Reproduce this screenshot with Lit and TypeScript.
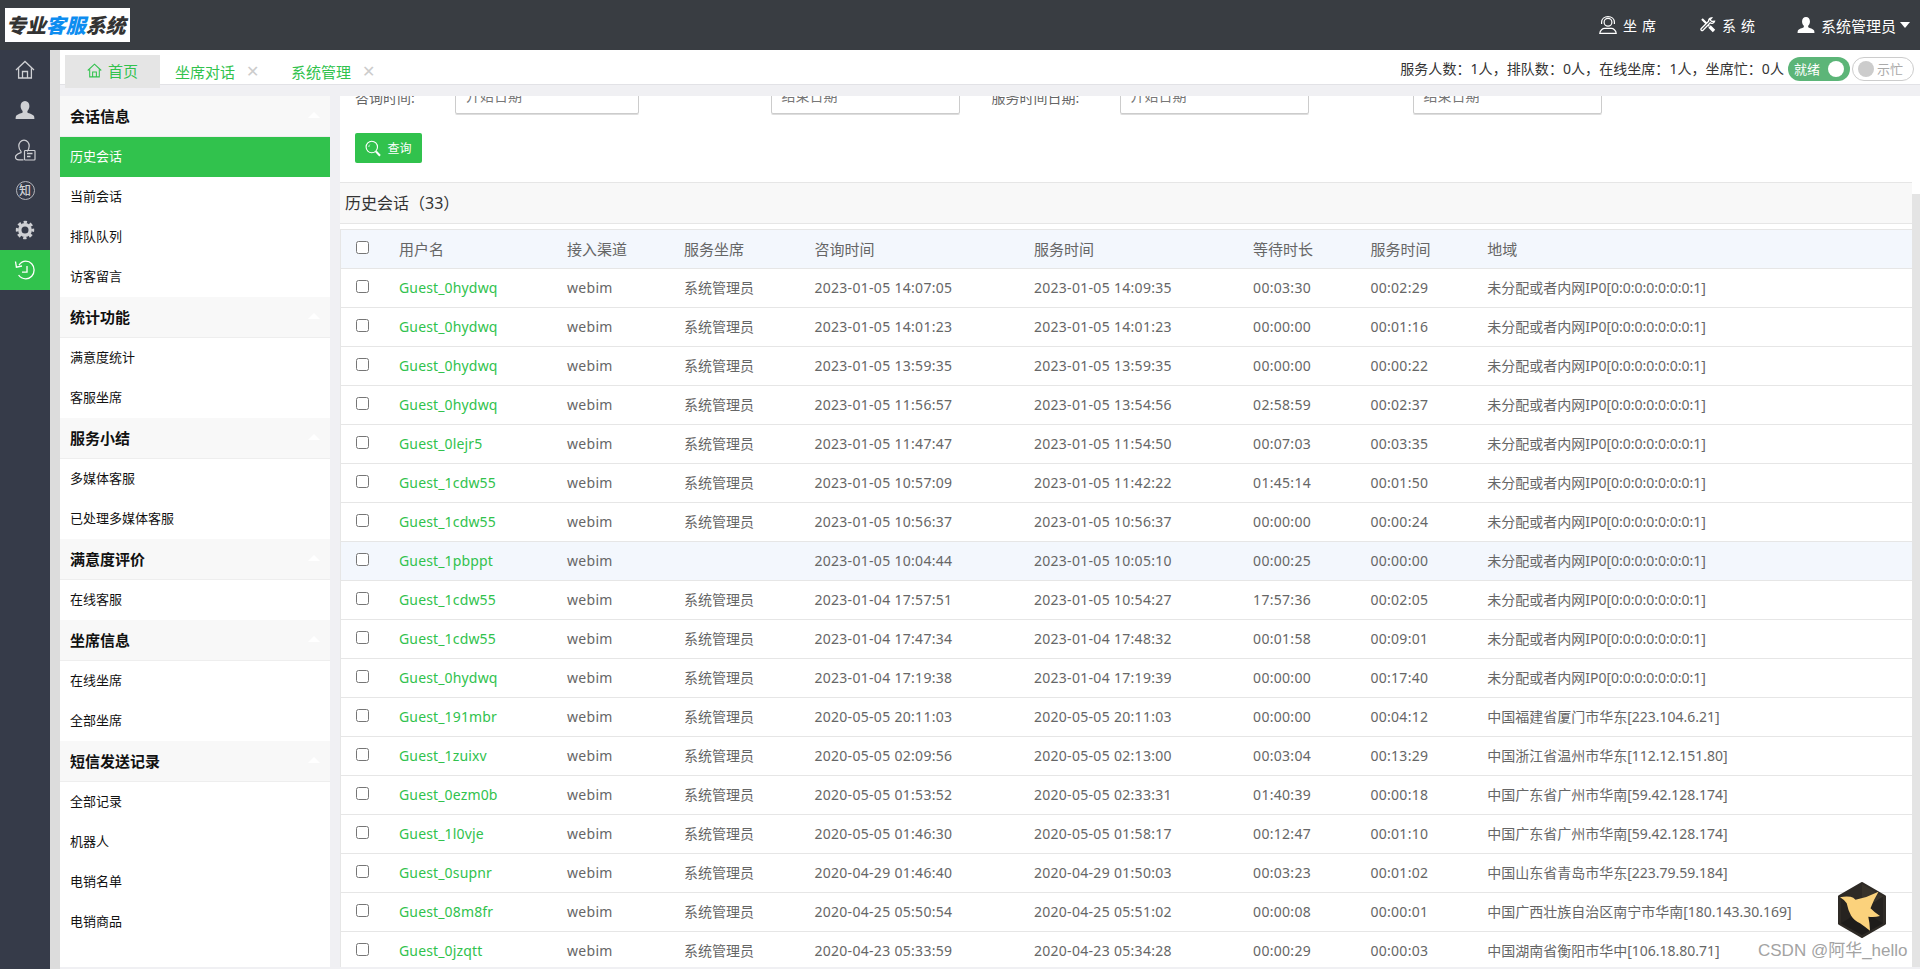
import { LitElement, html, css, svg } from "lit";
import { customElement } from "lit/decorators.js";

const A = "系统管理员";
const L0 = "未分配或者内网IP0[0:0:0:0:0:0:0:1]";
const rows: string[][] = [
  ["Guest_0hydwq", A, "2023-01-05 14:07:05", "2023-01-05 14:09:35", "00:03:30", "00:02:29", L0],
  ["Guest_0hydwq", A, "2023-01-05 14:01:23", "2023-01-05 14:01:23", "00:00:00", "00:01:16", L0],
  ["Guest_0hydwq", A, "2023-01-05 13:59:35", "2023-01-05 13:59:35", "00:00:00", "00:00:22", L0],
  ["Guest_0hydwq", A, "2023-01-05 11:56:57", "2023-01-05 13:54:56", "02:58:59", "00:02:37", L0],
  ["Guest_0lejr5", A, "2023-01-05 11:47:47", "2023-01-05 11:54:50", "00:07:03", "00:03:35", L0],
  ["Guest_1cdw55", A, "2023-01-05 10:57:09", "2023-01-05 11:42:22", "01:45:14", "00:01:50", L0],
  ["Guest_1cdw55", A, "2023-01-05 10:56:37", "2023-01-05 10:56:37", "00:00:00", "00:00:24", L0],
  ["Guest_1pbppt", "", "2023-01-05 10:04:44", "2023-01-05 10:05:10", "00:00:25", "00:00:00", L0],
  ["Guest_1cdw55", A, "2023-01-04 17:57:51", "2023-01-05 10:54:27", "17:57:36", "00:02:05", L0],
  ["Guest_1cdw55", A, "2023-01-04 17:47:34", "2023-01-04 17:48:32", "00:01:58", "00:09:01", L0],
  ["Guest_0hydwq", A, "2023-01-04 17:19:38", "2023-01-04 17:19:39", "00:00:00", "00:17:40", L0],
  ["Guest_191mbr", A, "2020-05-05 20:11:03", "2020-05-05 20:11:03", "00:00:00", "00:04:12", "中国福建省厦门市华东[223.104.6.21]"],
  ["Guest_1zuixv", A, "2020-05-05 02:09:56", "2020-05-05 02:13:00", "00:03:04", "00:13:29", "中国浙江省温州市华东[112.12.151.80]"],
  ["Guest_0ezm0b", A, "2020-05-05 01:53:52", "2020-05-05 02:33:31", "01:40:39", "00:00:18", "中国广东省广州市华南[59.42.128.174]"],
  ["Guest_1l0vje", A, "2020-05-05 01:46:30", "2020-05-05 01:58:17", "00:12:47", "00:01:10", "中国广东省广州市华南[59.42.128.174]"],
  ["Guest_0supnr", A, "2020-04-29 01:46:40", "2020-04-29 01:50:03", "00:03:23", "00:01:02", "中国山东省青岛市华东[223.79.59.184]"],
  ["Guest_08m8fr", A, "2020-04-25 05:50:54", "2020-04-25 05:51:02", "00:00:08", "00:00:01", "中国广西壮族自治区南宁市华南[180.143.30.169]"],
  ["Guest_0jzqtt", A, "2020-04-23 05:33:59", "2020-04-23 05:34:28", "00:00:29", "00:00:03", "中国湖南省衡阳市华中[106.18.80.71]"],
];

const menu: [string, string[]][] = [
  ["会话信息", ["历史会话", "当前会话", "排队队列", "访客留言"]],
  ["统计功能", ["满意度统计", "客服坐席"]],
  ["服务小结", ["多媒体客服", "已处理多媒体客服"]],
  ["满意度评价", ["在线客服"]],
  ["坐席信息", ["在线坐席", "全部坐席"]],
  ["短信发送记录", ["全部记录", "机器人", "电销名单", "电销商品"]],
];

const personPath = "M10 1C7.2 1 5.6 3.2 5.6 6c0 2 .8 3.8 2 4.9v1.6c-1.6 1.1-5.8 1.7-6.6 3.6-.3.8-.4 1.9-.4 2.9h18.8c0-1-.1-2.1-.4-2.9-.8-1.9-5-2.5-6.6-3.6v-1.6c1.2-1.1 2-2.9 2-4.9C14.4 3.2 12.8 1 10 1z";

const icons = {
  home: svg`<svg width="20" height="20" viewBox="0 0 20 20" fill="none" stroke="currentColor" stroke-width="1.3"><path d="M1 10 10 1.5 19 10"/><path d="M3.6 8.2V18h12.8V8.2"/><path d="M7.5 18v-6.5h5V18"/></svg>`,
  person: svg`<svg width="20" height="20" viewBox="0 0 20 20" fill="currentColor"><path d="${personPath}"/></svg>`,
  personTop: svg`<svg width="18" height="18" viewBox="0 0 20 20" fill="currentColor"><path d="${personPath}"/></svg>`,
  card: svg`<svg width="22" height="22" viewBox="0 0 22 22" fill="none" stroke="currentColor" stroke-width="1.2"><path d="M13 12.5c1.4-1.4 2.2-3.2 2.2-5.4C15.200 3.800 13 1.200 10 1.200S4.800 3.800 4.800 7.100c0 2.200.9 4 2.200 5.300v1.200c-2 .8-5.500 1.800-5.500 4.400 0 1.800 1.500 2.800 3.500 2.800h4.500"/><rect x="10.500" y="11.500" width="10.500" height="9.500" rx=".8"/><path d="M13 14.500h5.500M13 17.500h3.500" stroke-width="1.400"/></svg>`,
  gear: svg`<svg width="20" height="20" viewBox="0 0 20 20" fill="none" stroke="currentColor"><circle cx="10" cy="10" r="5.200" stroke-width="3.400"/><circle cx="10" cy="10" r="7.800" stroke-width="2.800" stroke-dasharray="3.300 2.830" stroke-dashoffset="1.600"/></svg>`,
  history: svg`<svg width="22" height="22" viewBox="0 0 22 22" fill="none" stroke="currentColor" stroke-width="1.300"><path d="M5 6.200C6.700 3.600 9 2.200 11.800 2.200c4.700 0 8.300 3.900 8.300 8.800s-3.600 8.800-8.300 8.800c-3.200 0-5.700-1.400-7.200-3.800"/><path d="M1.500 2.500l.9 5.700 5.600-1.200"/><path d="M13 7v6.200H8"/></svg>`,
  agent: svg`<svg width="18" height="18" viewBox="0 0 18 18" fill="none" stroke="currentColor" stroke-width="1.200"><circle cx="9" cy="6.300" r="3.900"/><path d="M2.600 8V6.300C2.600 2.900 5.400.7 9 .7s6.400 2.200 6.400 5.600V8"/><path d="M.8 17.300c.2-3 3-4.900 4.800-4.900h6.800c1.800 0 4.600 1.900 4.800 4.900z"/></svg>`,
  tools: svg`<svg width="16" height="16" viewBox="0 0 16 16" fill="none" stroke="currentColor"><path d="M2 2 9 9" stroke-width="2.200"/><path d="M9.500 9.500 14 14" stroke-width="3.400"/><path d="M14.500 4.200a3 3 0 0 1-4.300 1.700L3 13.200a1.200 1.200 0 0 1-1.700-1.700L8.600 4.200A3 3 0 0 1 11.800 .8L10 2.800l1.700 1.600z" stroke-width="1.300" fill="#393d42"/></svg>`,
  search: svg`<svg width="16" height="17" viewBox="0 0 16 17" fill="none" stroke="currentColor"><circle cx="6.800" cy="7" r="5.700" stroke-width="1.100"/><path d="M11 11.500 15 15.800" stroke-width="2"/><path d="M3.800 7a3 3 0 0 1 1-2.300" stroke-width=".8"/></svg>`,
  tabHome: svg`<svg width="15" height="15" viewBox="0 0 20 20" fill="none" stroke="currentColor" stroke-width="1.400"><path d="M1 10 10 1.500 19 10"/><path d="M3.600 8.200V18.500h12.800V8.200"/><path d="M7.500 18.500V12h5v6.500"/></svg>`,
};

@customElement("app-root")
export class AppRoot extends LitElement {
  static styles = css`
    :host {
      display: block;
      position: relative;
      width: 1920px;
      height: 969px;
      overflow: hidden;
      font-family: "Noto Sans", "Noto Sans CJK SC", sans-serif;
      font-size: 14px;
      color: #333;
      background: #f0f0f3;
    }
    .top {
      height: 50px;
      background: #393d42;
      display: flex;
      align-items: center;
      padding: 0 10px 0 5px;
      box-sizing: border-box;
      color: #fff;
    }
    .logo {
      width: 125px;
      height: 34px;
      background: #fff;
      color: #333;
      font: italic 900 20px/34px "Noto Sans CJK SC", sans-serif;
      white-space: nowrap;
      padding-left: 1px;
      box-sizing: border-box;
      letter-spacing: -0.1px;
    }
    .logo b { color: #0d8df0; font-weight: 900; }
    .top-right { margin-left: auto; display: flex; align-items: center; gap: 37px; }
    .top-item { display: flex; align-items: center; gap: 6px; font-size: 14px; line-height: 20px; }
    .top-item.first { margin-right: 2px; }
    .top-item .sp { letter-spacing: 5px; margin-top: 2px; }
    .top-item .name { font-size: 15px; margin-top: 1px; }
    .caret {
      width: 0;
      height: 0;
      border-left: 5.5px solid transparent;
      border-right: 5.5px solid transparent;
      border-top: 6px solid #fff;
      margin-left: -2px;
    }
    .body { display: flex; height: 919px; }
    .rail { width: 50px; background: #363b49; flex: none; color: #cfd0d4; }
    .rail-item { height: 40px; display: flex; align-items: center; justify-content: center; }
    .rail-item.on { background: #31c24d; color: #fff; }
    .zhi {
      width: 17px;
      height: 17px;
      border: 1px solid #b5b6bc;
      border-radius: 50%;
      font-size: 12px;
      line-height: 17px;
      text-align: center;
      font-weight: 500;
    }
    .strip { width: 10px; background: #dcdcdc; flex: none; }
    .right { flex: 1; min-width: 0; display: flex; flex-direction: column; }
    .tabs {
      height: 35px;
      flex: none;
      background: #fff;
      border-bottom: 1px solid #e2e2e6;
      box-sizing: border-box;
      display: flex;
      align-items: flex-start;
      padding: 5px 6px 0 5px;
      color: #31c24d;
      font-size: 15px;
      line-height: 22px;
    }
    .tab-home {
      width: 95px;
      height: 33px;
      flex: none;
      background: #e5e5e5;
      display: flex;
      align-items: center;
      justify-content: center;
      gap: 6px;
      padding-bottom: 2px;
      box-sizing: border-box;
    }
    .tab { display: flex; align-items: center; margin-top: 6px; flex: none; white-space: nowrap; }
    .tab.a { margin-left: 15px; }
    .tab.b { margin-left: 32px; }
    .tab .x { color: #ccc; margin-left: 11px; font-size: 16px; line-height: 20px; font-family: "Liberation Sans", sans-serif; }
    .status { margin-left: auto; display: flex; align-items: center; gap: 2px; margin-top: 2px; color: #333; font-size: 14px; white-space: nowrap; }
    .status .txt { margin-right: 2px; letter-spacing: 0.06px; }
    .sw {
      width: 62px;
      height: 24px;
      border-radius: 12px;
      box-sizing: border-box;
      display: flex;
      align-items: center;
      padding: 0 6px;
      font-size: 13px;
      gap: 3px;
    }
    .sw.on { background: #5cb578; color: #fff; justify-content: space-between; }
    .sw.off { border: 1px solid #ccc; color: #aaa; padding: 0 5px; }
    .knob { width: 16px; height: 16px; border-radius: 50%; flex: none; background: #fff; }
    .sw.off .knob { background: #ccc; }
    .content { flex: 1; min-height: 0; display: flex; gap: 10px; margin-top: 11px; margin-bottom: 2px; }
    .side { width: 270px; background: #fff; flex: none; color: #111; overflow: hidden; }
    .sec {
      height: 41px;
      background: #f8f8f8;
      border-bottom: 1px solid #eee;
      box-sizing: border-box;
      display: flex;
      align-items: center;
      justify-content: space-between;
      padding: 0 10px 2px;
      font-size: 15px;
      font-weight: 700;
    }
    .sec i { width: 0; height: 0; border-left: 6px solid transparent; border-right: 6px solid transparent; border-bottom: 6px solid #fff; }
    .it { height: 40px; line-height: 38px; padding-left: 10px; font-size: 13px; }
    .it.on { background: #31c24d; color: #fff; }
    .main { flex: 1; min-width: 0; background: #fff; position: relative; overflow: hidden; }
    .form {
      margin-top: -16px;
      height: 34px;
      display: grid;
      grid-template-columns: 100px 184px 131.6px 189.4px 31.6px 128px 189.5px 103.5px 189.5px;
      grid-template-rows: 34px;
      padding-left: 15px;
      align-items: center;
      color: #666;
      font-size: 14px;
    }
    .form .tilde { text-align: center; line-height: 14px; margin-bottom: 17px; }
    .date {
      height: 34px;
      border: 1px solid #ccc;
      border-radius: 2px;
      box-shadow: 0 1px 0 #ddd;
      box-sizing: border-box;
      padding-left: 10px;
      line-height: 30px;
      color: #777;
    }
    .btn {
      margin: 19px 0 19px 15px;
      width: 67px;
      height: 30px;
      background: #31c24d;
      border-radius: 2px;
      color: #fff;
      display: flex;
      align-items: center;
      justify-content: center;
      gap: 6px;
      font-size: 12px;
    }
    .panel-head {
      width: 1572px;
      height: 42px;
      border-top: 1px solid #e6e6e6;
      border-bottom: 1px solid #e6e6e6;
      background: #f8f8f8;
      box-sizing: border-box;
      padding-left: 5px;
      line-height: 40px;
      font-size: 16px;
      color: #333;
    }
    table {
      width: 1572px;
      margin-top: 5px;
      border-collapse: separate;
      border-spacing: 0;
      table-layout: fixed;
      border-top: 1px solid #e6e6e6;
      border-left: 1px solid #e6e6e6;
      box-sizing: border-box;
      color: #666;
    }
    th, td {
      height: 39px;
      padding: 0;
      box-sizing: border-box;
      border-bottom: 1px solid #e6e6e6;
      text-align: left;
      font-weight: 400;
      white-space: nowrap;
      line-height: 20px;
      letter-spacing: 0.3px;
    }
    th { font-size: 15px; background: #f3f7fd; letter-spacing: 0; padding-bottom: 1px; }
    td.tight { letter-spacing: 0; }
    tr.hl td { background: #f3f7fd; }
    .u { color: #31c24d; letter-spacing: 0.15px; }
    input[type="checkbox"] { margin: 0 0 3px 15px; width: 13px; height: 13px; display: block; }
    .thumb { position: absolute; right: 0; top: 98px; bottom: 0; width: 8px; background: #e4e4e4; }
    .bird { position: absolute; left: 1837px; top: 882px; }
    .mark {
      position: absolute;
      left: 1758px;
      top: 940px;
      color: #a3a3a3;
      font-family: "Liberation Sans", "Noto Sans CJK SC", sans-serif;
      font-size: 17px;
      line-height: 22px;
      white-space: nowrap;
    }
  `;

  render() {
    const widths = [58, 168, 117, 130.4, 219.5, 219.2, 117.3, 116.8, 425.8];
    return html`
      <div class="top">
        <div class="logo">专业<b>客服</b>系统</div>
        <div class="top-right">
          <div class="top-item first">${icons.agent}<span class="sp">坐席</span></div>
          <div class="top-item">${icons.tools}<span class="sp">系统</span></div>
          <div class="top-item">${icons.personTop}<span class="name">系统管理员</span><span class="caret"></span></div>
        </div>
      </div>
      <div class="body">
        <div class="rail">
          <div class="rail-item">${icons.home}</div>
          <div class="rail-item">${icons.person}</div>
          <div class="rail-item">${icons.card}</div>
          <div class="rail-item"><span class="zhi">知</span></div>
          <div class="rail-item">${icons.gear}</div>
          <div class="rail-item on">${icons.history}</div>
        </div>
        <div class="strip"></div>
        <div class="right">
          <div class="tabs">
            <div class="tab-home">${icons.tabHome}<span>首页</span></div>
            <div class="tab a">坐席对话<span class="x">✕</span></div>
            <div class="tab b">系统管理<span class="x">✕</span></div>
            <div class="status">
              <span class="txt">服务人数：1人，排队数：0人，在线坐席：1人，坐席忙：0人</span>
              <div class="sw on"><span>就绪</span><span class="knob"></span></div>
              <div class="sw off"><span class="knob"></span><span>示忙</span></div>
            </div>
          </div>
          <div class="content">
            <div class="side">
              ${menu.map(
                ([h, items], s) => html`
                  <div class="sec"><span>${h}</span><i></i></div>
                  ${items.map((t, i) => html`<div class="it ${s === 0 && i === 0 ? "on" : ""}">${t}</div>`)}
                `
              )}
            </div>
            <div class="main">
              <div class="form">
                <span>咨询时间:</span>
                <div class="date">开始日期</div>
                <span class="tilde">至</span>
                <div class="date">结束日期</div>
                <span></span>
                <span>服务时间日期:</span>
                <div class="date">开始日期</div>
                <span class="tilde">至</span>
                <div class="date">结束日期</div>
              </div>
              <div class="btn">${icons.search}<span>查询</span></div>
              <div class="panel-head">历史会话（33）</div>
              <table>
                <colgroup>${widths.map((w) => html`<col style="width:${w}px" />`)}</colgroup>
                <thead>
                  <tr>
                    <th><input type="checkbox" /></th>
                    <th>用户名</th><th>接入渠道</th><th>服务坐席</th><th>咨询时间</th>
                    <th>服务时间</th><th>等待时长</th><th>服务时间</th><th>地域</th>
                  </tr>
                </thead>
                <tbody>
                  ${rows.map(
                    (r, i) => html`<tr class="${i === 7 ? "hl" : ""}">
                      <td><input type="checkbox" /></td>
                      <td class="u">${r[0]}</td>
                      <td>webim</td>
                      <td class="tight">${r[1]}</td>
                      <td>${r[2]}</td><td>${r[3]}</td><td>${r[4]}</td><td>${r[5]}</td>
                      <td class="tight">${r[6]}</td>
                    </tr>`
                  )}
                </tbody>
              </table>
              <div class="thumb"></div>
            </div>
          </div>
        </div>
      </div>
      <svg class="bird" width="50" height="56" viewBox="0 0 50 56">
        <path d="M25 1.500 47.500 14.500V41.500L25 54.500 2.500 41.500V14.500Z" fill="#262320" stroke="#2f2b26" stroke-width="3" stroke-linejoin="round"/>
        <path d="M25 2 46 14.500 25 28Z" fill="#38332b"/>
        <path d="M25 2 4 14.500 25 28Z" fill="#2e2a25"/>
        <path d="M4 41.500 25 28 46 41.500 25 53Z" fill="#1e1c1a"/>
        <path d="M3 15.300Q9 13.800 13.500 14.800 16.500 15.500 18.500 17.800 30 15.500 41.500 9.700 37 17 33.500 26.300 37.500 30.500 43 34 37 35.800 31.300 34.700 32.800 41 33 48.700 27.500 44.500 23 41.300 17 38.500 14 33.500 11 28 9.700 21.300 7 17.500 3 15.300Z" fill="#fbd27c"/>
      </svg>
      <div class="mark">CSDN @阿华_hello</div>
    `;
  }
}
